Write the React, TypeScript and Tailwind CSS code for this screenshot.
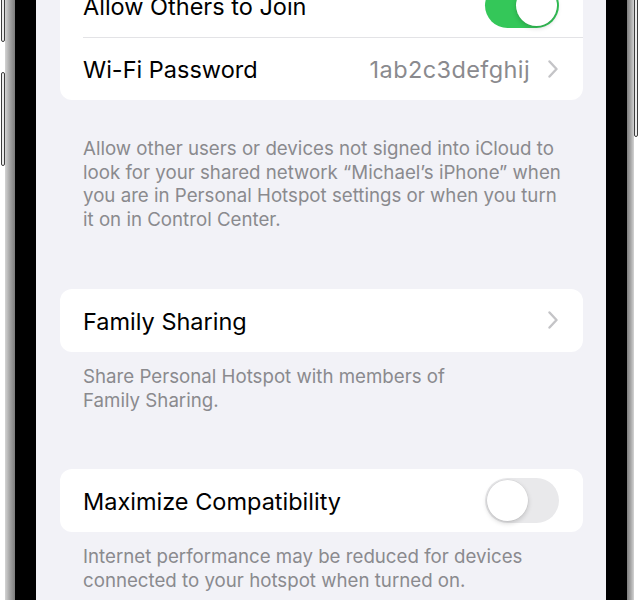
import React from "react";

function Chevron() {
  return (
    <svg width="10" height="18" viewBox="0 0 10 18" fill="none">
      <polyline points="1.5,1.5 8.5,9 1.5,16.5" stroke="#C4C4C7" strokeWidth="2.4" strokeLinecap="round" strokeLinejoin="round" />
    </svg>
  );
}

function Toggle({ on }: { on: boolean }) {
  return (
    <div className={on ? "w-[74px] h-[45px] rounded-full bg-[#34C759] flex items-center justify-end px-[2px]" : "w-[74px] h-[45px] rounded-full bg-[#E9E9EB] flex items-center justify-start px-[2px]"}>
      <div className="w-[41px] h-[41px] rounded-full bg-white shadow-[0_2px_5px_rgba(0,0,0,0.18),0_0_0_0.5px_rgba(0,0,0,0.06)]" />
    </div>
  );
}

function Row({ children }: { children: React.ReactNode }) {
  return <div className="h-[63px] flex items-center justify-between pl-[23px] pr-[24px]">{children}</div>;
}

function Label({ children }: { children: React.ReactNode }) {
  return <span className="text-[23.5px] translate-y-[1px]">{children}</span>;
}

function Footer({ lines, className }: { lines: string[]; className: string }) {
  return (
    <p className={"pl-[23px] text-[18.7px] leading-[23.7px] text-[#8A8A8E] " + className}>
      {lines.map((l, i) => (
        <span key={i} className="block whitespace-nowrap">{l}</span>
      ))}
    </p>
  );
}

export default function App() {
  return (
    <div className="w-[640px] h-[600px] flex bg-white overflow-hidden font-['Inter',sans-serif]">
      {/* left edge of the phone */}
      <div className="w-[5px] flex flex-col pl-[1px]">
        <div className="w-[4px] h-[46px] -mt-[4px] rounded-b-[2px] border border-[#3d3d3d] bg-[#ececec]" />
        <div className="w-[4px] h-[94px] mt-[30px] rounded-[2px] border border-[#3d3d3d] bg-[#ececec]" />
      </div>
      <div className="w-[10px] bg-gradient-to-r from-[#d4d4d4] via-[#a3a3a3] to-[#7d7d7d]" />
      <div className="w-[21px] bg-black" />

      {/* screen */}
      <div className="w-[570px] bg-[#F2F2F7] pl-[24px] pr-[23px] text-black">
        <div className="-mt-[26px] bg-white rounded-[12px]">
          <Row>
            <Label>Allow Others to Join</Label>
            <Toggle on />
          </Row>
          <div className="ml-[23px] h-px bg-[#E3E3E6]" />
          <div className="h-[62px] flex items-center justify-between pl-[23px] pr-[25px]">
            <Label>Wi-Fi Password</Label>
            <div className="flex items-center gap-[18px]">
              <span className="text-[23.5px] tracking-[0.4px] text-[#8A8A8E] translate-y-[1px]">1ab2c3defghij</span>
              <Chevron />
            </div>
          </div>
        </div>

        <Footer
          className="mt-[37px]"
          lines={[
            "Allow other users or devices not signed into iCloud to",
            "look for your shared network “Michael’s iPhone” when",
            "you are in Personal Hotspot settings or when you turn",
            "it on in Control Center.",
          ]}
        />

        <div className="mt-[57px] bg-white rounded-[12px]">
          <div className="h-[63px] flex items-center justify-between pl-[23px] pr-[25px]">
            <Label>Family Sharing</Label>
            <Chevron />
          </div>
        </div>

        <Footer
          className="mt-[13px]"
          lines={["Share Personal Hotspot with members of", "Family Sharing."]}
        />

        <div className="mt-[57px] bg-white rounded-[12px]">
          <Row>
            <Label>Maximize Compatibility</Label>
            <Toggle on={false} />
          </Row>
        </div>

        <Footer
          className="mt-[13px]"
          lines={["Internet performance may be reduced for devices", "connected to your hotspot when turned on."]}
        />
      </div>

      {/* right edge of the phone */}
      <div className="w-[21px] bg-black" />
      <div className="w-[7px] bg-gradient-to-r from-[#7d7d7d] via-[#a3a3a3] to-[#d4d4d4]" />
      <div className="w-[6px] flex flex-col">
        <div className="w-[4px] h-[140px] -mt-[3px] rounded-b-[2px] border border-[#3d3d3d] bg-[#ececec]" />
      </div>
    </div>
  );
}
